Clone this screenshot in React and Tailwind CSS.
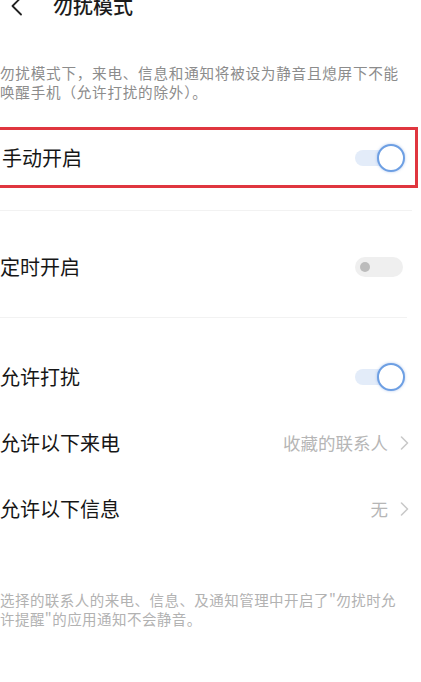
import React from 'react';

const font = { fontFamily: '"Noto Sans CJK SC", "Noto Sans", sans-serif' };

const ToggleOn = () => (
  <div className="relative flex h-[28px] w-[50px] items-center">
    <div className="h-[16px] w-[44px] rounded-full bg-[#e3ecf9]" />
    <div className="absolute right-0 top-0 h-[28px] w-[28px] rounded-full border-[2.5px] border-[#6d9fe3] bg-white shadow-[0_0_3px_rgba(90,140,220,0.45)]" />
  </div>
);

const ToggleOff = () => (
  <div className="flex h-[20px] w-[48px] items-center rounded-full bg-[#efefef] pl-[5px]">
    <div className="h-[10px] w-[10px] rounded-full bg-[#bcbcbc]" />
  </div>
);

const Chevron = () => (
  <svg width="9" height="14" viewBox="0 0 9 14" fill="none">
    <path d="M1.5 1 L7.5 7 L1.5 13" stroke="#c9c9c9" strokeWidth="1.6" strokeLinecap="round" strokeLinejoin="round" />
  </svg>
);

const Label = ({ children }) => (
  <span className="text-[20px] leading-none text-[#161616]">{children}</span>
);

const LinkRow = ({ label, value }) => (
  <div className="flex h-[66px] items-center justify-between pr-[12px]">
    <Label>{label}</Label>
    <div className="flex items-center gap-[12px]">
      <span className="text-[17.5px] leading-none text-[#b6b6b6]">{value}</span>
      <Chevron />
    </div>
  </div>
);

export default function App() {
  return (
    <div lang="zh-CN" className="min-h-[682px] w-[421px] overflow-hidden bg-white" style={font}>
      {/* header, cut off at top */}
      <header className="-mt-[14px] flex h-[40px] items-center">
        <div className="ml-[10px] flex w-[43px] items-center">
          <svg width="13" height="20" viewBox="0 0 13 20" fill="none">
            <path d="M11 1.5 L2.5 10 L11 18.5" stroke="#222" strokeWidth="1.8" strokeLinecap="round" strokeLinejoin="round" />
          </svg>
        </div>
        <h1 className="text-[20px] font-medium leading-none text-[#1c1c1c]">勿扰模式</h1>
      </header>

      <p className="mt-[37px] whitespace-nowrap text-[14.6px] leading-[19px] tracking-[0.75px] text-[#8c8c8c]">
        勿扰模式下，来电、信息和通知将被设为静音且熄屏下不能
        <br />
        唤醒手机（允许打扰的除外）。
      </p>

      <div className="mt-[26px] flex h-[61px] w-[418px] items-center justify-between border-y-[3px] border-r-[3px] border-[#e0363f] pl-[2px] pr-[10px]">
        <Label>手动开启</Label>
        <ToggleOn />
      </div>

      <div className="mt-[22px] h-px w-[412px] bg-[#f2f2f2]" />

      <div className="flex h-[106px] items-center justify-between pr-[18px] pt-[6px]">
        <Label>定时开启</Label>
        <ToggleOff />
      </div>

      <div className="h-px w-[407px] bg-[#f2f2f2]" />

      <div className="mt-[26px] flex h-[66px] items-center justify-between pr-[16px]">
        <Label>允许打扰</Label>
        <ToggleOn />
      </div>

      <LinkRow label="允许以下来电" value="收藏的联系人" />
      <LinkRow label="允许以下信息" value="无" />

      <p className="mt-[48px] whitespace-nowrap text-[14.5px] leading-[19px] tracking-[0.45px] text-[#b2b2b2]">
        选择的联系人的来电、信息、及通知管理中开启了"勿扰时允
        <br />
        许提醒"的应用通知不会静音。
      </p>
    </div>
  );
}
